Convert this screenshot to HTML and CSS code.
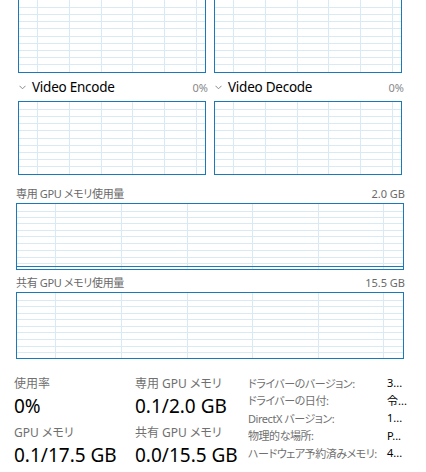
FILE: index.html
```html
<!DOCTYPE html>
<html lang="ja">
<head>
<meta charset="utf-8">
<link rel="stylesheet" href="styles.css">
</head>
<body>
<div class="page">
  <div class="engines">
    <div class="engine">
      <div class="chart small">
        <svg class="grid" width="186" height="72" viewBox="0 0 186 72"><path d="M0 7.5H186M0 14.5H186M0 21.5H186M0 28.5H186M0 36.5H186M0 43.5H186M0 50.5H186M0 57.5H186M0 64.5H186M18.5 0V72M50.5 0V72M82.5 0V72M113.5 0V72M145.5 0V72M177.5 0V72"/></svg>
      </div>
    </div>
    <div class="engine">
      <div class="chart small">
        <svg class="grid" width="186" height="72" viewBox="0 0 186 72"><path d="M0 7.5H186M0 14.5H186M0 21.5H186M0 28.5H186M0 36.5H186M0 43.5H186M0 50.5H186M0 57.5H186M0 64.5H186M18.5 0V72M50.5 0V72M82.5 0V72M113.5 0V72M145.5 0V72M177.5 0V72"/></svg>
      </div>
    </div>
    <div class="engine">
      <div class="ehead">
        <svg class="chev" width="7" height="5" viewBox="0 0 7 5"><polyline points="0.5,0.8 3.5,3.8 6.5,0.8" fill="none" stroke="#8a8a8a" stroke-width="1"/></svg>
        <span class="ename">Video Encode</span>
        <span class="epct">0%</span>
      </div>
      <div class="chart small">
        <svg class="grid" width="186" height="72" viewBox="0 0 186 72"><path d="M0 7.5H186M0 14.5H186M0 21.5H186M0 28.5H186M0 36.5H186M0 43.5H186M0 50.5H186M0 57.5H186M0 64.5H186M18.5 0V72M50.5 0V72M82.5 0V72M113.5 0V72M145.5 0V72M177.5 0V72"/></svg>
      </div>
    </div>
    <div class="engine">
      <div class="ehead">
        <svg class="chev" width="7" height="5" viewBox="0 0 7 5"><polyline points="0.5,0.8 3.5,3.8 6.5,0.8" fill="none" stroke="#8a8a8a" stroke-width="1"/></svg>
        <span class="ename">Video Decode</span>
        <span class="epct">0%</span>
      </div>
      <div class="chart small">
        <svg class="grid" width="186" height="72" viewBox="0 0 186 72"><path d="M0 7.5H186M0 14.5H186M0 21.5H186M0 28.5H186M0 36.5H186M0 43.5H186M0 50.5H186M0 57.5H186M0 64.5H186M18.5 0V72M50.5 0V72M82.5 0V72M113.5 0V72M145.5 0V72M177.5 0V72"/></svg>
      </div>
    </div>
  </div>

  <div class="mem">
    <div class="mhead"><span class="mname">専用 GPU メモリ使用量</span><span>2.0 GB</span></div>
    <div class="chart big">
      <svg class="grid" width="386" height="65" viewBox="0 0 386 65"><path d="M0 7.5H386M0 13.5H386M0 19.5H386M0 26.5H386M0 32.5H386M0 39.5H386M0 46.5H386M0 53.5H386M0 59.5H386M38.5 0V65M104.5 0V65M170.5 0V65M235.5 0V65M301.5 0V65M366.5 0V65"/><path class="use" d="M0 62.5H386"/></svg>
    </div>
    <div class="mhead second"><span class="mname">共有 GPU メモリ使用量</span><span>15.5 GB</span></div>
    <div class="chart big">
      <svg class="grid" width="386" height="65" viewBox="0 0 386 65"><path d="M0 7.5H386M0 13.5H386M0 20.5H386M0 26.5H386M0 33.5H386M0 39.5H386M0 46.5H386M0 53.5H386M0 59.5H386M38.5 0V65M104.5 0V65M170.5 0V65M235.5 0V65M301.5 0V65M366.5 0V65"/></svg>
    </div>
  </div>

  <div class="stats">
    <div class="stat">
      <div class="slabel">使用率</div>
      <div class="svalue">0%</div>
      <div class="slabel second">GPU メモリ</div>
      <div class="svalue">0.1/17.5 GB</div>
    </div>
    <div class="stat">
      <div class="slabel">専用 GPU メモリ</div>
      <div class="svalue">0.1/2.0 GB</div>
      <div class="slabel second">共有 GPU メモリ</div>
      <div class="svalue">0.0/15.5 GB</div>
    </div>
    <div class="props">
      <div class="pk">ドライバーのバージョン:</div><div class="pv">3...</div>
      <div class="pk">ドライバーの日付:</div><div class="pv">令...</div>
      <div class="pk">DirectX バージョン:</div><div class="pv">1...</div>
      <div class="pk">物理的な場所:</div><div class="pv">P...</div>
      <div class="pk">ハードウェア予約済みメモリ:</div><div class="pv">4...</div>
    </div>
  </div>
</div>
</body>
</html>
```
FILE: styles.css
```css
html, body {
  margin: 0;
  padding: 0;
  background: #ffffff;
}
body {
  font-family: "Noto Sans", "Noto Sans CJK JP", sans-serif;
  color: #000;
  width: 426px;
  height: 472px;
  overflow: hidden;
}
.page {
  margin-top: -1px;
}
.engines {
  display: grid;
  grid-template-columns: 188px 188px;
  column-gap: 8px;
  padding-left: 18px;
}
.chart {
  box-sizing: border-box;
  border: 1px solid #1a7ab9;
  background-color: #fff;
}
.chart.small {
  height: 74px;
}
.chart.big {
  height: 67px;
}
.grid {
  display: block;
  shape-rendering: crispEdges;
}
.grid path {
  fill: none;
  stroke: #d9eaf4;
  stroke-width: 1;
}
.grid path.use {
  stroke: #1a7ab9;
}
.ehead {
  display: flex;
  align-items: center;
  height: 28px;
  margin-right: -2px;
  padding-left: 1px;
}
.chev {
  flex: none;
  margin-right: 6px;
  margin-top: 1px;
}
.ename {
  font-size: 13.5px;
  color: #000;
  flex: 1;
  letter-spacing: -0.25px;
}
.epct {
  font-size: 11px;
  color: #888;
}
.mem {
  padding-left: 16px;
  width: 388px;
  display: flex;
  flex-direction: column;
}
.mhead {
  display: flex;
  justify-content: space-between;
  align-items: flex-end;
  height: 28px;
  padding-bottom: 2px;
  box-sizing: border-box;
  font-size: 11px;
  color: #6a6a6a;
  font-feature-settings: "palt";
  margin-right: -1px;
}
.mname {
  letter-spacing: -0.35px;
}
.mhead.second {
  height: 22px;
}
.stats {
  display: flex;
  padding-left: 14px;
  margin-top: 16px;
}
.stat {
  display: flex;
  flex-direction: column;
  width: 121px;
}
.stat + .stat {
  width: 113px;
}
.slabel {
  font-size: 12px;
  line-height: 18px;
  color: #707070;
  font-feature-settings: "palt";
}
.slabel.second {
  margin-top: 5px;
}
.svalue {
  font-size: 19px;
  line-height: 26px;
  color: #000;
}
.props {
  display: grid;
  grid-template-columns: 139px auto;
  grid-auto-rows: 17.5px;
  align-items: center;
  font-size: 11px;
  font-feature-settings: "palt";
  margin-top: -1px;
}
.pk {
  color: #707070;
  white-space: nowrap;
  letter-spacing: -0.45px;
}
.pv {
  color: #000;
}
```
